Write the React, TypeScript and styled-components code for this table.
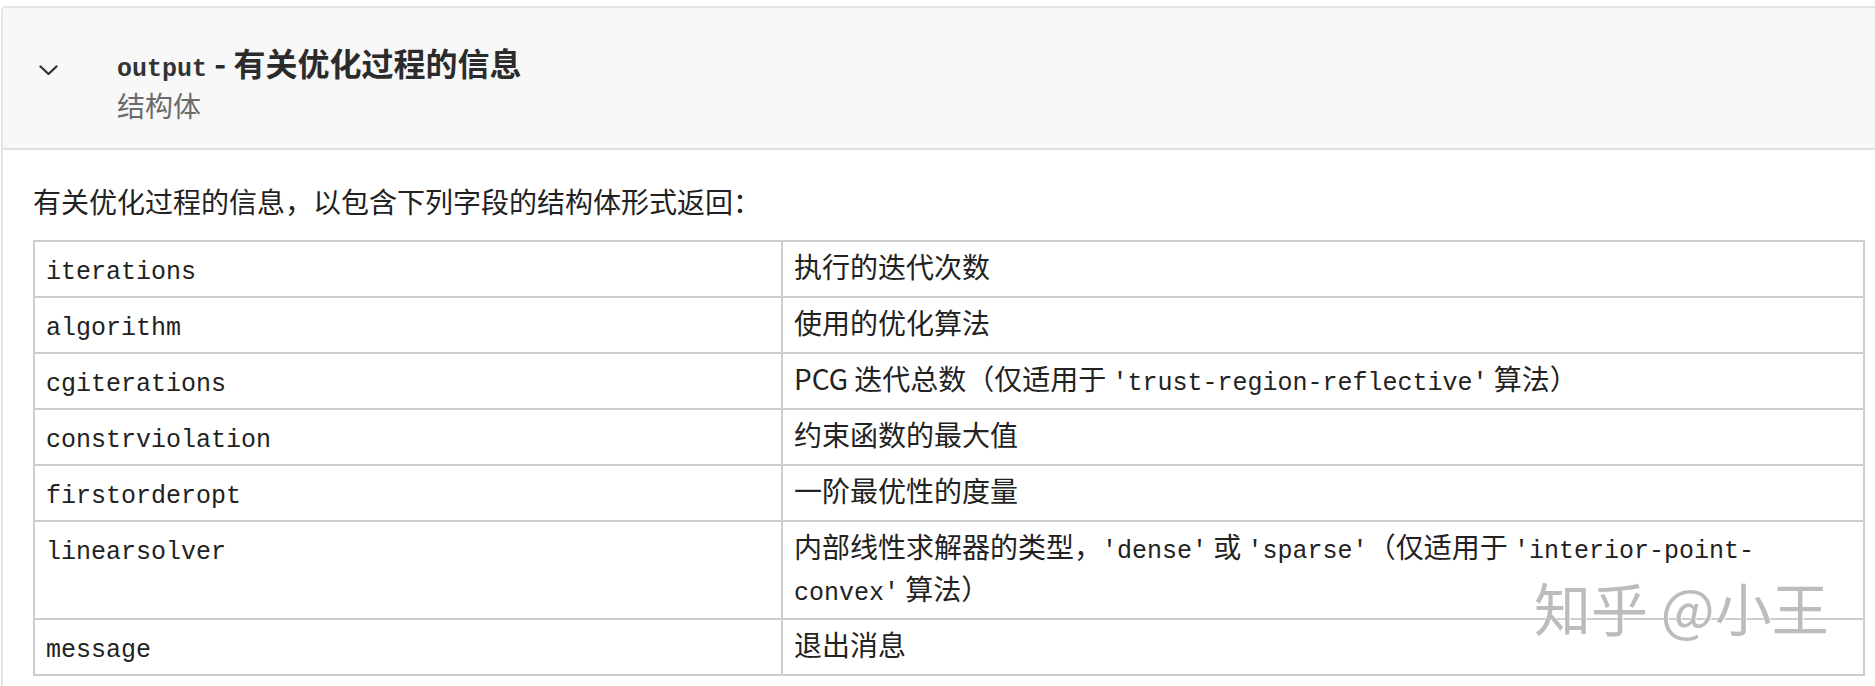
import React from "react";
import styled, { createGlobalStyle } from "styled-components";

const GlobalStyle = createGlobalStyle`
  html, body {
    margin: 0;
    padding: 0;
    background: #ffffff;
    overflow: hidden;
  }
  body {
    font-family: "Noto Sans CJK SC", "Noto Sans", sans-serif;
    color: #222222;
  }
`;

const mono = `"Liberation Mono", "DejaVu Sans Mono", monospace`;

const Panel = styled.section`
  margin: 6px 0 0 1px;
  border-top: 2px solid #e4e4e4;
  border-left: 2px solid #e4e4e4;
  border-top-left-radius: 5px;
  min-height: 700px;
  background: #ffffff;
`;

const Header = styled.header`
  display: flex;
  align-items: flex-start;
  padding: 33px 0 21px 36px;
  background: #f8f8f8;
  border-bottom: 2px solid #e0e0e0;
  border-top-left-radius: 4px;
`;

const ChevronBox = styled.div`
  width: 78px;
  flex: none;
  padding-top: 24px;
  display: flex;
`;

const TitleBlock = styled.div`
  display: flex;
  flex-direction: column;
`;

const Title = styled.h3`
  margin: 0;
  font-size: 32px;
  line-height: 43px;
  font-weight: 700;
  color: #2b2b2b;
`;

const TitleCode = styled.code`
  font-family: ${mono};
  font-size: 25px;
  font-weight: 700;
  line-height: 1;
  color: #333333;
`;

const Subtitle = styled.div`
  font-size: 28px;
  line-height: 43px;
  color: #6b6b6b;
`;

const Body = styled.div`
  position: relative;
  padding: 30px 0 40px 30px;
`;

const Intro = styled.p`
  margin: 0 0 18px;
  font-size: 28px;
  line-height: 42px;
  color: #222222;
`;

const Table = styled.table`
  border-collapse: collapse;
  width: 1832px;
  table-layout: fixed;
`;

const Row = styled.tr``;

const Cell = styled.td<{ $code?: boolean }>`
  border: 2px solid #cdcdcd;
  padding: ${(p) => (p.$code ? "10px 11px 2px" : "3px 11px 9px")};
  vertical-align: top;
  line-height: 42px;
  font-size: ${(p) => (p.$code ? "25px" : "28px")};
  font-family: ${(p) =>
    p.$code ? mono : `"Noto Sans CJK SC", "Noto Sans", sans-serif`};
  color: #222222;
  width: ${(p) => (p.$code ? "724px" : "auto")};
`;

const Code = styled.code`
  font-family: ${mono};
  font-size: 25px;
  line-height: 1;
`;

const Watermark = styled.div`
  position: absolute;
  left: 1531px;
  top: 428px;
  font-size: 57px;
  line-height: 57px;
  font-weight: 400;
  color: rgba(160, 160, 160, 0.7);
  text-shadow: 0 0 2px #ffffff, 1px 1px 1px rgba(255, 255, 255, 0.9);
  white-space: nowrap;
  pointer-events: none;
`;

const Chevron = () => (
  <svg width="19" height="11" viewBox="0 0 19 11" fill="none">
    <polyline
      points="1.5,1.5 9.5,9 17.5,1.5"
      stroke="#333333"
      strokeWidth="2.3"
      strokeLinecap="round"
      strokeLinejoin="round"
    />
  </svg>
);

type Field = { name: string; desc: React.ReactNode };

const fields: Field[] = [
  { name: "iterations", desc: "执行的迭代次数" },
  { name: "algorithm", desc: "使用的优化算法" },
  {
    name: "cgiterations",
    desc: (
      <>
        PCG 迭代总数（仅适用于 <Code>'trust-region-reflective'</Code> 算法）
      </>
    ),
  },
  { name: "constrviolation", desc: "约束函数的最大值" },
  { name: "firstorderopt", desc: "一阶最优性的度量" },
  {
    name: "linearsolver",
    desc: (
      <>
        内部线性求解器的类型，<Code>'dense'</Code> 或 <Code>'sparse'</Code>
        （仅适用于 <Code>'interior-point-convex'</Code> 算法）
      </>
    ),
  },
  { name: "message", desc: "退出消息" },
];

export default function App() {
  return (
    <>
      <GlobalStyle />
      <Panel>
        <Header>
          <ChevronBox>
            <Chevron />
          </ChevronBox>
          <TitleBlock>
            <Title>
              <TitleCode>output</TitleCode> - 有关优化过程的信息
            </Title>
            <Subtitle>结构体</Subtitle>
          </TitleBlock>
        </Header>
        <Body>
          <Intro>有关优化过程的信息，以包含下列字段的结构体形式返回：</Intro>
          <Table>
            <tbody>
              {fields.map((f) => (
                <Row key={f.name}>
                  <Cell $code>{f.name}</Cell>
                  <Cell>{f.desc}</Cell>
                </Row>
              ))}
            </tbody>
          </Table>
          <Watermark>知乎 @小王</Watermark>
        </Body>
      </Panel>
    </>
  );
}
